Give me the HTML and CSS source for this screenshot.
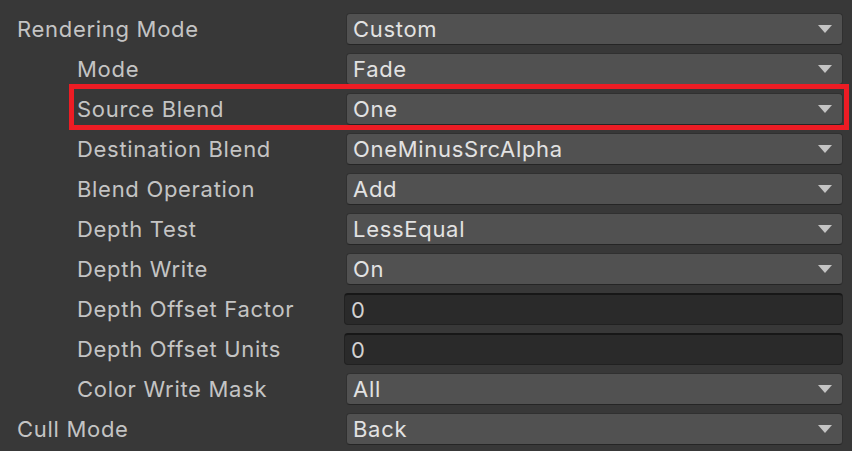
FILE: index.html
```html
<!DOCTYPE html>
<html>
<head>
<meta charset="utf-8">
<link rel="stylesheet" href="styles.css">
</head>
<body>
<div class="panel">
  <div class="row">
    <div class="label">Rendering Mode</div>
    <div class="dropdown"><span>Custom</span><svg class="arrow" width="14" height="8" viewBox="0 0 14 8"><polygon points="0,0 14,0 7,8"/></svg></div>
  </div>
  <div class="row">
    <div class="label sub">Mode</div>
    <div class="dropdown"><span>Fade</span><svg class="arrow" width="14" height="8" viewBox="0 0 14 8"><polygon points="0,0 14,0 7,8"/></svg></div>
  </div>
  <div class="row">
    <div class="label sub">Source Blend</div>
    <div class="dropdown"><span>One</span><svg class="arrow" width="14" height="8" viewBox="0 0 14 8"><polygon points="0,0 14,0 7,8"/></svg></div>
  </div>
  <div class="row">
    <div class="label sub">Destination Blend</div>
    <div class="dropdown"><span>OneMinusSrcAlpha</span><svg class="arrow" width="14" height="8" viewBox="0 0 14 8"><polygon points="0,0 14,0 7,8"/></svg></div>
  </div>
  <div class="row">
    <div class="label sub">Blend Operation</div>
    <div class="dropdown"><span>Add</span><svg class="arrow" width="14" height="8" viewBox="0 0 14 8"><polygon points="0,0 14,0 7,8"/></svg></div>
  </div>
  <div class="row">
    <div class="label sub">Depth Test</div>
    <div class="dropdown"><span>LessEqual</span><svg class="arrow" width="14" height="8" viewBox="0 0 14 8"><polygon points="0,0 14,0 7,8"/></svg></div>
  </div>
  <div class="row">
    <div class="label sub">Depth Write</div>
    <div class="dropdown"><span>On</span><svg class="arrow" width="14" height="8" viewBox="0 0 14 8"><polygon points="0,0 14,0 7,8"/></svg></div>
  </div>
  <div class="row">
    <div class="label sub">Depth Offset Factor</div>
    <div class="field"><span>0</span></div>
  </div>
  <div class="row">
    <div class="label sub">Depth Offset Units</div>
    <div class="field"><span>0</span></div>
  </div>
  <div class="row">
    <div class="label sub">Color Write Mask</div>
    <div class="dropdown"><span>All</span><svg class="arrow" width="14" height="8" viewBox="0 0 14 8"><polygon points="0,0 14,0 7,8"/></svg></div>
  </div>
  <div class="row">
    <div class="label">Cull Mode</div>
    <div class="dropdown"><span>Back</span><svg class="arrow" width="14" height="8" viewBox="0 0 14 8"><polygon points="0,0 14,0 7,8"/></svg></div>
  </div>
  <div class="highlight"></div>
</div>
</body>
</html>
```
FILE: styles.css
```css
html, body {
  margin: 0;
  padding: 0;
  background: #383838;
  width: 852px;
  height: 451px;
  overflow: hidden;
}
.panel {
  position: relative;
  padding-top: 9px;
  font-family: Inter, "Noto Sans", sans-serif;
  font-size: 22px;
  letter-spacing: 0.7px;
}
.row {
  display: flex;
  align-items: center;
  height: 40px;
}
.label {
  width: 327px;
  padding-left: 17px;
  color: #c4c4c4;
  white-space: nowrap;
}
.label.sub {
  width: 267px;
  padding-left: 77px;
}
.dropdown {
  box-sizing: border-box;
  margin-left: 2px;
  width: 497px;
  height: 32px;
  background: #515151;
  border: 1px solid #303030;
  border-bottom-color: #252525;
  border-radius: 4px;
  display: flex;
  align-items: center;
  justify-content: space-between;
  padding: 0 10px 0 6px;
  color: #e2e2e2;
}
.arrow {
  fill: #c4c4c4;
  display: block;
}
.field {
  box-sizing: border-box;
  width: 499px;
  height: 32px;
  background: #2a2a2a;
  border: 1px solid #212121;
  border-top: 2px solid #171717;
  border-radius: 4px;
  display: flex;
  align-items: center;
  padding: 0 6px;
  color: #d2d2d2;
}
.highlight {
  position: absolute;
  left: 69px;
  top: 84px;
  width: 780px;
  height: 46px;
  box-sizing: border-box;
  border: 5px solid #ed1c24;
  pointer-events: none;
}
```
